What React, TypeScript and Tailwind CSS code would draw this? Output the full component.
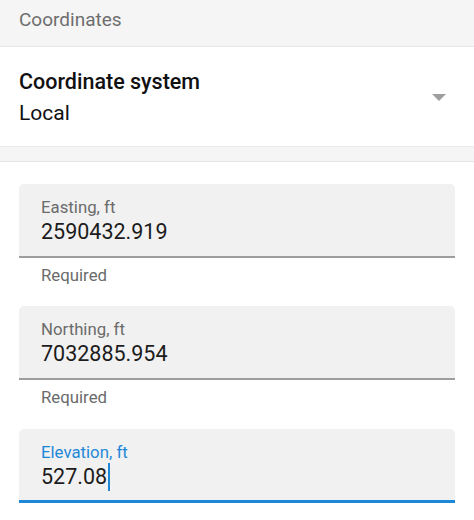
import React from "react";

function Field({
  label,
  value,
  helper,
  focused,
}: {
  label: string;
  value: string;
  helper?: string;
  focused?: boolean;
}) {
  return (
    <div className="mx-[19px]">
      <div
        className={
          "h-[74px] rounded-t-[5px] bg-[#f1f1f1] pl-[22px] pt-[13px] " +
          (focused ? "border-b-[3px] border-[#1e88d8]" : "border-b-2 border-[#9e9e9e]")
        }
      >
        <div
          className={
            "text-[16.8px] leading-[20px] " +
            (focused ? "text-[#1e88d8]" : "text-[#6b6b6b]")
          }
        >
          {label}
        </div>
        <div className="flex items-center text-[21.5px] leading-[30px] text-[#1c1c1c]">
          <span>{value}</span>
          {focused && <span className="ml-[1px] inline-block h-[28px] w-[2px] bg-[#1e88d8]" />}
        </div>
      </div>
      {helper ? (
        <div className="h-[48px] pl-[22px] pt-[7px] text-[16.8px] leading-[20px] text-[#6b6b6b]">
          {helper}
        </div>
      ) : null}
    </div>
  );
}

export default function App() {
  return (
    <div
      className="w-[474px] h-[520px] bg-white overflow-hidden"
      style={{ fontFamily: "Roboto, 'Noto Sans', sans-serif" }}
    >
      <div className="h-[47px] bg-[#f5f5f5] border-b border-[#e6e6e6] flex items-center pl-[19px] pb-[6px]">
        <span className="text-[19px] text-[#6e6e6e]">Coordinates</span>
      </div>
      <div className="h-[99px] flex items-center justify-between pl-[19px] pr-[28px]">
        <div className="pt-[2px]">
          <div className="text-[21.5px] leading-[30px] font-medium text-[#111]">Coordinate system</div>
          <div className="text-[21px] leading-[32px] text-[#111]">Local</div>
        </div>
        <svg width="14" height="7" viewBox="0 0 14 7" className="mt-[2px]">
          <path d="M0 0 L14 0 L7 7 Z" fill="#9e9e9e" />
        </svg>
      </div>
      <div className="h-[16px] bg-[#f5f5f5] border-t border-[#ececec] border-b border-b-[#e4e4e4]" />
      <div className="pt-[22px]">
        <Field label="Easting, ft" value="2590432.919" helper="Required" />
        <Field label="Northing, ft" value="7032885.954" helper="Required" />
        <div className="pt-[1px]">
          <Field label="Elevation, ft" value="527.08" focused />
        </div>
      </div>
    </div>
  );
}
